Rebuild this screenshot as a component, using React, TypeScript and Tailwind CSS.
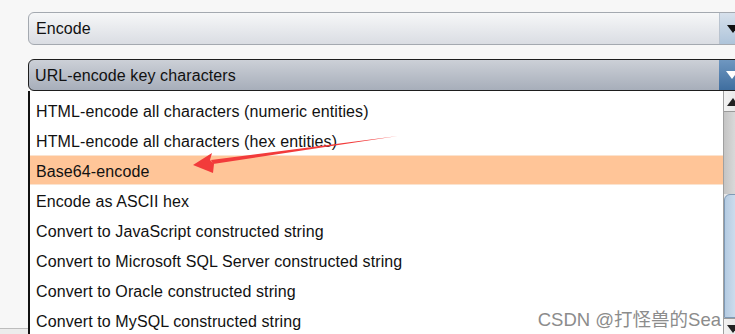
import React from "react";

const items = [
  "HTML-encode all characters (numeric entities)",
  "HTML-encode all characters (hex entities)",
  "Base64-encode",
  "Encode as ASCII hex",
  "Convert to JavaScript constructed string",
  "Convert to Microsoft SQL Server constructed string",
  "Convert to Oracle constructed string",
  "Convert to MySQL constructed string",
];

const font = { fontFamily: '"Liberation Sans", Arial, sans-serif' };

export default function App() {
  return (
    <div
      className="relative w-[735px] h-[334px] overflow-hidden bg-[#f7f7f7] text-[16px] tracking-[0.1px] text-[#111]"
      style={font}
    >
      <div className="flex flex-col pl-[28px] pt-[12px] w-[760px]">
        {/* combo 1 */}
        <div className="flex h-[33px] rounded-l-[6px] border border-[#a4a9b0] bg-gradient-to-b from-[#f6f7f8] to-[#dadde3] overflow-hidden">
          <div className="flex-1 flex items-center pl-[7px] pt-[1px]">Encode</div>
          <div className="w-[40px] flex items-center pl-[7px] border-l border-[#b9c3cf] bg-gradient-to-b from-[#d7e1ec] to-[#aec4da]">
            <svg width="12" height="10" viewBox="0 0 12 10">
              <path d="M0 1 L12 1 L6 9 Z" fill="#111" />
            </svg>
          </div>
        </div>
        {/* combo 2 */}
        <div className="mt-[14px] flex h-[32px] rounded-l-[6px] border-[1.5px] border-[#1e1e1e] bg-gradient-to-b from-[#ccd0d7] to-[#a7aeba] overflow-hidden">
          <div className="flex-1 flex items-center pl-[6px] pt-[2px]">URL-encode key characters</div>
          <div className="w-[40px] flex items-center pl-[7px] bg-gradient-to-b from-[#6f97c0] to-[#3f6e9f]">
            <svg width="12" height="10" viewBox="0 0 12 10">
              <path d="M0 1 L12 1 L6 9 Z" fill="#fff" />
            </svg>
          </div>
        </div>
        {/* list */}
        <div className="flex h-[260px] border-l-2 border-[#111] bg-white">
          <div className="flex-1 flex flex-col pt-[4px]">
            {items.map((t, i) => (
              <div
                key={t}
                className={
                  "h-[30px] flex items-center pl-[6px] pt-[3px] whitespace-nowrap " +
                  (i === 2 ? "bg-[#ffc598] border-y border-[#fbe3cf]" : "")
                }
              >
                {t}
              </div>
            ))}
          </div>
          {/* scrollbar */}
          <div className="w-[37px] flex flex-col border-l border-[#a0a0a0] bg-[#e9e9e9]">
            <div className="h-[21px] flex items-start pl-[3px] pt-[6px] bg-gradient-to-r from-[#f2f2f2] to-[#d6d6d6] border-b border-[#9a9a9a]">
              <svg width="12" height="10" viewBox="0 0 12 10">
                <path d="M0 9 L12 9 L6 1 Z" fill="#222" />
              </svg>
            </div>
            <div className="h-[82px] bg-gradient-to-r from-[#c4c4c4] via-[#e6e6e6] to-[#cfcfcf]" />
            <div className="h-[124px] rounded-t-[6px] border border-[#7f9ab6] bg-gradient-to-r from-[#b4cbe2] via-[#dce8f4] to-[#c2d5e8]" />
            <div className="h-[20px] flex items-start pl-[3px] pt-[5px] bg-gradient-to-r from-[#f2f2f2] to-[#d6d6d6] border-t border-[#9a9a9a]">
              <svg width="12" height="10" viewBox="0 0 12 10">
                <path d="M0 1 L12 1 L6 9 Z" fill="#222" />
              </svg>
            </div>
          </div>
        </div>
      </div>

      {/* bottom-left panel edge */}
      <div className="absolute left-0 top-[328px] w-[28px] h-[6px] border-t border-[#bdbdbd] bg-[#ececec]" />

      {/* red arrow annotation */}
      <svg className="absolute left-0 top-0" width="735" height="334" viewBox="0 0 735 334">
        <path d="M398 136 L211 160 L213 164 Z" fill="#f23b3b" />
        <path d="M193 165 L212 153 L210 160 L214 164 L213 173 Z" fill="#f23b3b" />
      </svg>

      {/* watermark */}
      <div
        className="absolute right-[14px] top-[306px] text-[18.5px] tracking-normal text-[#8c8c8c] whitespace-nowrap"
        style={{
          fontFamily: '"Liberation Sans", "Noto Sans CJK SC", sans-serif',
          textShadow: "0 0 1px #ffffff",
        }}
      >
        CSDN @打怪兽的Sea
      </div>
    </div>
  );
}
